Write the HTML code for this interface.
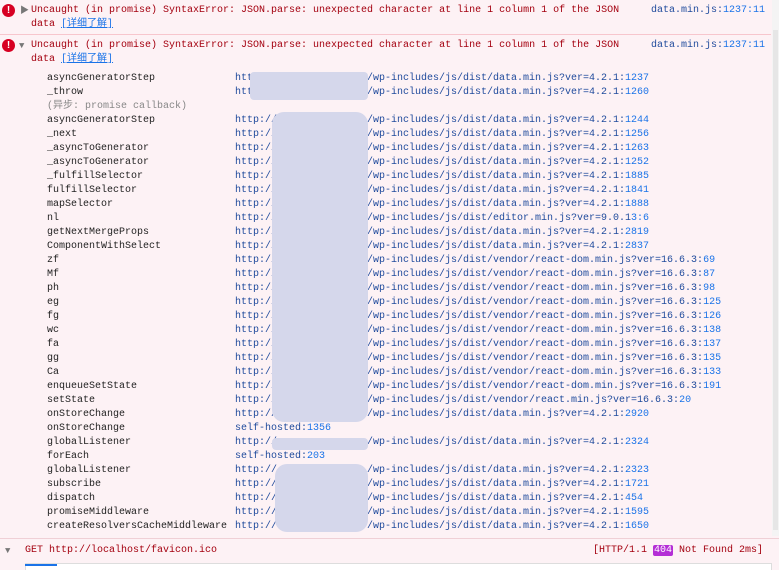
<!DOCTYPE html>
<html><head><meta charset="utf-8"><style>
html,body{margin:0;padding:0;width:779px;height:568px;overflow:hidden;background:#fdf2f5;font-family:"Liberation Mono","Noto Sans CJK SC",monospace;font-size:10px;}
.t{position:absolute;white-space:pre;line-height:14px;}
.err{color:#a4000f;}
.name{color:#222;}
.u{color:#1f4a9c;}
.n{color:#1a73e8;}
.lk{color:#1a73e8;text-decoration:underline;}
.blob{position:absolute;background:#d5d7eb;border-radius:12px;}
.ic{position:absolute;width:13px;height:13px;border-radius:50%;background:#d70022;color:#fff;font:bold 10px "Liberation Sans",sans-serif;text-align:center;line-height:13px;}
</style></head><body>
<div class="ic" style="left:2px;top:4px">!</div>
<div class="t" style="left:20px;top:4px;color:#777;font-size:9px">▶</div>
<div class="t err" style="left:31px;top:4px">Uncaught (in promise) SyntaxError: JSON.parse: unexpected character at line 1 column 1 of the JSON</div>
<div class="t err" style="left:31px;top:18px">data <span class="lk">[详细了解]</span></div>
<div class="t u" style="left:651px;top:4px">data.min.js:<span class="n">1237:11</span></div>
<div style="position:absolute;left:0;top:34px;width:771px;height:1px;background:#f7c6cd"></div>
<div class="ic" style="left:2px;top:39px">!</div>
<div class="t" style="left:19px;top:39px;color:#777;font-size:9px">▼</div>
<div class="t err" style="left:31px;top:39px">Uncaught (in promise) SyntaxError: JSON.parse: unexpected character at line 1 column 1 of the JSON</div>
<div class="t err" style="left:31px;top:53px">data <span class="lk">[详细了解]</span></div>
<div class="t u" style="left:651px;top:39px">data.min.js:<span class="n">1237:11</span></div>
<div style="position:absolute;left:772px;top:0;width:7px;height:536px;background:#f4f4f4"></div>
<div style="position:absolute;left:773px;top:30px;width:5px;height:500px;background:#e6e6e6"></div>
<div id="st"></div>
<div class="blob" style="left:250px;top:72px;width:118px;height:28px;border-radius:4px"></div>
<div class="blob" style="left:272px;top:112px;width:96px;height:310px"></div>
<div class="blob" style="left:272px;top:438px;width:96px;height:12px;border-radius:4px"></div>
<div class="blob" style="left:275px;top:464px;width:93px;height:68px"></div>
<div style="position:absolute;left:0;top:538px;width:779px;height:1px;background:#f0d0d6"></div>
<div class="t" style="left:5px;top:544px;color:#777;font-size:9px">▼</div>
<div class="t err" style="left:25px;top:544px">GET http://localhost/favicon.ico</div>
<div class="t err" style="left:593px;top:544px">[HTTP/1.1 <span style="background:#b42fd6;color:#fff;border-radius:2px;padding:0 1px">404</span> Not Found 2ms]</div>
<div style="position:absolute;left:25px;top:563px;width:745px;height:6px;border:1px solid #ddd;border-bottom:none;background:#fff"></div>
<div style="position:absolute;left:25px;top:564px;width:32px;height:2px;background:#1a73e8"></div>
<script>
var rows=[
["asyncGeneratorStep","data.min.js?ver=4.2.1:","1237"],
["_throw","data.min.js?ver=4.2.1:","1260"],
["(异步: promise callback)",null],
["asyncGeneratorStep","data.min.js?ver=4.2.1:","1244"],
["_next","data.min.js?ver=4.2.1:","1256"],
["_asyncToGenerator","data.min.js?ver=4.2.1:","1263"],
["_asyncToGenerator","data.min.js?ver=4.2.1:","1252"],
["_fulfillSelector","data.min.js?ver=4.2.1:","1885"],
["fulfillSelector","data.min.js?ver=4.2.1:","1841"],
["mapSelector","data.min.js?ver=4.2.1:","1888"],
["nl","editor.min.js?ver=9.0.1","3:6"],
["getNextMergeProps","data.min.js?ver=4.2.1:","2819"],
["ComponentWithSelect","data.min.js?ver=4.2.1:","2837"],
["zf","vendor/react-dom.min.js?ver=16.6.3:","69"],
["Mf","vendor/react-dom.min.js?ver=16.6.3:","87"],
["ph","vendor/react-dom.min.js?ver=16.6.3:","98"],
["eg","vendor/react-dom.min.js?ver=16.6.3:","125"],
["fg","vendor/react-dom.min.js?ver=16.6.3:","126"],
["wc","vendor/react-dom.min.js?ver=16.6.3:","138"],
["fa","vendor/react-dom.min.js?ver=16.6.3:","137"],
["gg","vendor/react-dom.min.js?ver=16.6.3:","135"],
["Ca","vendor/react-dom.min.js?ver=16.6.3:","133"],
["enqueueSetState","vendor/react-dom.min.js?ver=16.6.3:","191"],
["setState","vendor/react.min.js?ver=16.6.3:","20"],
["onStoreChange","data.min.js?ver=4.2.1:","2920"],
["onStoreChange","SH","1356"],
["globalListener","data.min.js?ver=4.2.1:","2324"],
["forEach","SH","203"],
["globalListener","data.min.js?ver=4.2.1:","2323"],
["subscribe","data.min.js?ver=4.2.1:","1721"],
["dispatch","data.min.js?ver=4.2.1:","454"],
["promiseMiddleware","data.min.js?ver=4.2.1:","1595"],
["createResolversCacheMiddleware","data.min.js?ver=4.2.1:","1650"]];
var h="";
rows.forEach(function(r,i){var y=72+i*14;
if(r[1]===null){h+='<div class="t" style="left:47px;top:'+y+'px;color:#888">'+r[0]+'</div>';return;}
h+='<div class="t name" style="left:47px;top:'+y+'px">'+r[0]+'</div>';
if(r[1]=="SH"){h+='<div class="t u" style="left:235px;top:'+y+'px">self-hosted:<span class="n">'+r[2]+'</span></div>';}
else{h+='<div class="t u" style="left:235px;top:'+y+'px">http://</div><div class="t u" style="left:367px;top:'+y+'px">/wp-includes/js/dist/'+r[1]+'<span class="n">'+r[2]+'</span></div>';}
});
document.getElementById("st").innerHTML=h;
</script>
</body></html>
